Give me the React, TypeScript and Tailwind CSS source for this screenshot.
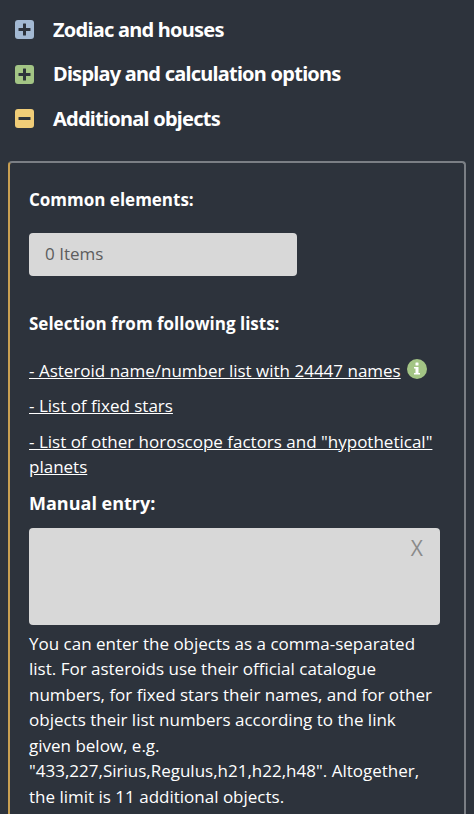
const sections = [
  { title: "Zodiac and houses", color: "bg-[#a3b9d3]", open: false },
  { title: "Display and calculation options", color: "bg-[#a3c585]", open: false },
  { title: "Additional objects", color: "bg-[#f0cd78]", open: true },
];

const App = () => {
  return (
    <div className="h-[814px] w-[474px] overflow-hidden bg-[#2d333c] font-['Open_Sans',sans-serif] text-white">
      <div className="pl-[15px] pt-[7.5px]">
        {sections.map((section) => (
          <div key={section.title} className="flex h-[44.5px] items-center gap-[19px]">
            <div className={`flex h-[19px] w-[19px] items-center justify-center rounded-[3px] ${section.color}`}>
              <svg width="13" height="13" viewBox="0 0 13 13" fill="#2d333c">
                <rect x="0.5" y="5" width="12" height="3" rx="0.5" />
                {!section.open && <rect x="5" y="0.5" width="3" height="12" rx="0.5" />}
              </svg>
            </div>
            <span className="font-['Noto_Sans',sans-serif] text-[20px] font-bold tracking-[-0.75px]">{section.title}</span>
          </div>
        ))}
      </div>

      <div className="mx-2 mt-[19.5px] h-[700px] rounded-t-[4px] border-t-2 border-r-2 border-l-2 border-t-[#7b7f85] border-r-[#7b7f85] border-l-[#c89f52] px-[19px] pt-[25px] text-[17px]">
        <p className="font-bold leading-[24px]">Common elements:</p>
        <div className="mt-[21px] flex h-[43px] w-[268px] items-center rounded-[4px] bg-[#d8d8d8] pl-4 text-[#5d5d5d]">0 Items</div>

        <p className="mt-[36px] font-bold leading-[24px]">Selection from following lists:</p>
        <div className="mt-[23px] flex items-center gap-[6px] leading-[24px]">
          <a className="underline">- Asteroid name/number list with 24447 names</a>
          <span className="mb-[4px] flex h-[20px] w-[20px] items-center justify-center rounded-full bg-[#a3c585]">
            <svg width="8" height="13" viewBox="0 0 8 13" fill="white">
              <rect x="2.5" y="0.5" width="3" height="3" rx="0.5" />
              <path d="M1 5h4.5v6H7v1.5H1V11h1.5V6.5H1z" />
            </svg>
          </span>
        </div>
        <a className="mt-[11px] block leading-[24px] underline">- List of fixed stars</a>
        <a className="mt-[11px] block leading-[25px] underline">- List of other horoscope factors and "hypothetical" planets</a>

        <p className="mt-[11px] text-[18px] font-bold leading-[26px]">Manual entry:</p>
        <div className="relative mt-[12px] h-[97px] w-[411px] rounded-[4px] bg-[#d8d8d8]">
          <span className="absolute top-[6px] right-[17px] text-[21px] leading-[28px] text-[#8a8a8a]">X</span>
        </div>
        <p className="mt-[6px] w-[405px] leading-[25.5px]">
          You can enter the objects as a comma-separated list. For asteroids use their official catalogue numbers, for fixed stars their names, and for other objects their list numbers according to the link given below, e.g. "433,227,Sirius,Regulus,h21,h22,h48". Altogether, the limit is 11 additional objects.
        </p>
      </div>
    </div>
  );
};

export default App;
